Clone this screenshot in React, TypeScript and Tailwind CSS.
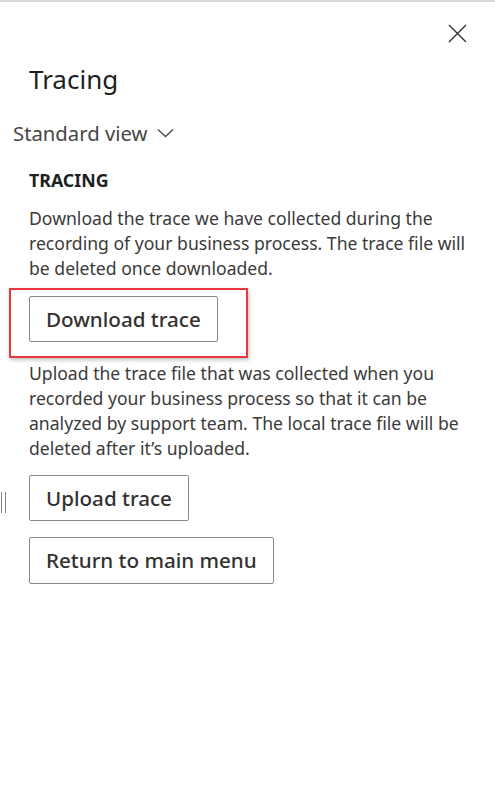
import React from "react";

export default function App() {
  const btn =
    "h-[46px] px-[16px] border border-[#8a8886] rounded-[2px] text-[20.6px] font-medium text-[#323130] bg-white";
  return (
    <div className="relative w-[495px] h-[800px] bg-white overflow-hidden" style={{ fontFamily: '"Noto Sans", "Open Sans", sans-serif' }}>
      <div className="h-[2px] bg-[#d9d9d9]" />
      <div className="flex justify-end pr-[28px] pt-[21px]">
        <button className="w-[20px] h-[20px] flex items-center justify-center text-[#323130]">
          <svg width="19" height="19" viewBox="0 0 19 19" fill="none" stroke="#323130" strokeWidth="1.4">
            <path d="M1 1 L18 18 M18 1 L1 18" />
          </svg>
        </button>
      </div>
      <h1 className="pl-[29px] mt-[19px] text-[26px] leading-[34px] text-[#201f1e] font-normal">Tracing</h1>
      <div className="pl-[13px] mt-[24px] flex items-center gap-[10px] text-[20.3px] leading-[26px] text-[#484644]">
        <span>Standard view</span>
        <svg width="17" height="10" viewBox="0 0 17 10" fill="none" stroke="#484644" strokeWidth="1.3">
          <path d="M1 1.5 L8.5 8.5 L16 1.5" />
        </svg>
      </div>
      <div className="pl-[29px] pr-[20px]">
        <h2 className="mt-[23px] text-[17.8px] leading-[22px] font-bold text-[#201f1e]">TRACING</h2>
        <p className="mt-[15px] text-[17.6px] leading-[25px] text-[#3b3a39]">
          Download the trace we have collected during the recording of your business process. The trace file will be deleted once downloaded.
        </p>
        <div className="relative mt-[15px] w-fit">
          <div className="absolute left-[-20px] top-[-8px] w-[239px] h-[70px] border-2 border-[#e8383d] shadow-[1px_2px_4px_rgba(0,0,0,0.25)] pointer-events-none" />
          <button className={btn}>Download trace</button>
        </div>
        <p className="mt-[19px] text-[17.6px] leading-[25px] text-[#3b3a39]">
          Upload the trace file that was collected when you recorded your business process so that it can be analyzed by support team. The local trace file will be deleted after it’s uploaded.
        </p>
        <button className={`mt-[14px] block ${btn}`}>Upload trace</button>
        <button className={`mt-[16px] block ${btn} h-[47px]`}>Return to main menu</button>
      </div>
      <div className="absolute left-[1px] top-[492px] flex gap-[3px]">
        <div className="w-px h-[21px] bg-[#8a8886]" />
        <div className="w-px h-[21px] bg-[#8a8886]" />
      </div>
    </div>
  );
}
